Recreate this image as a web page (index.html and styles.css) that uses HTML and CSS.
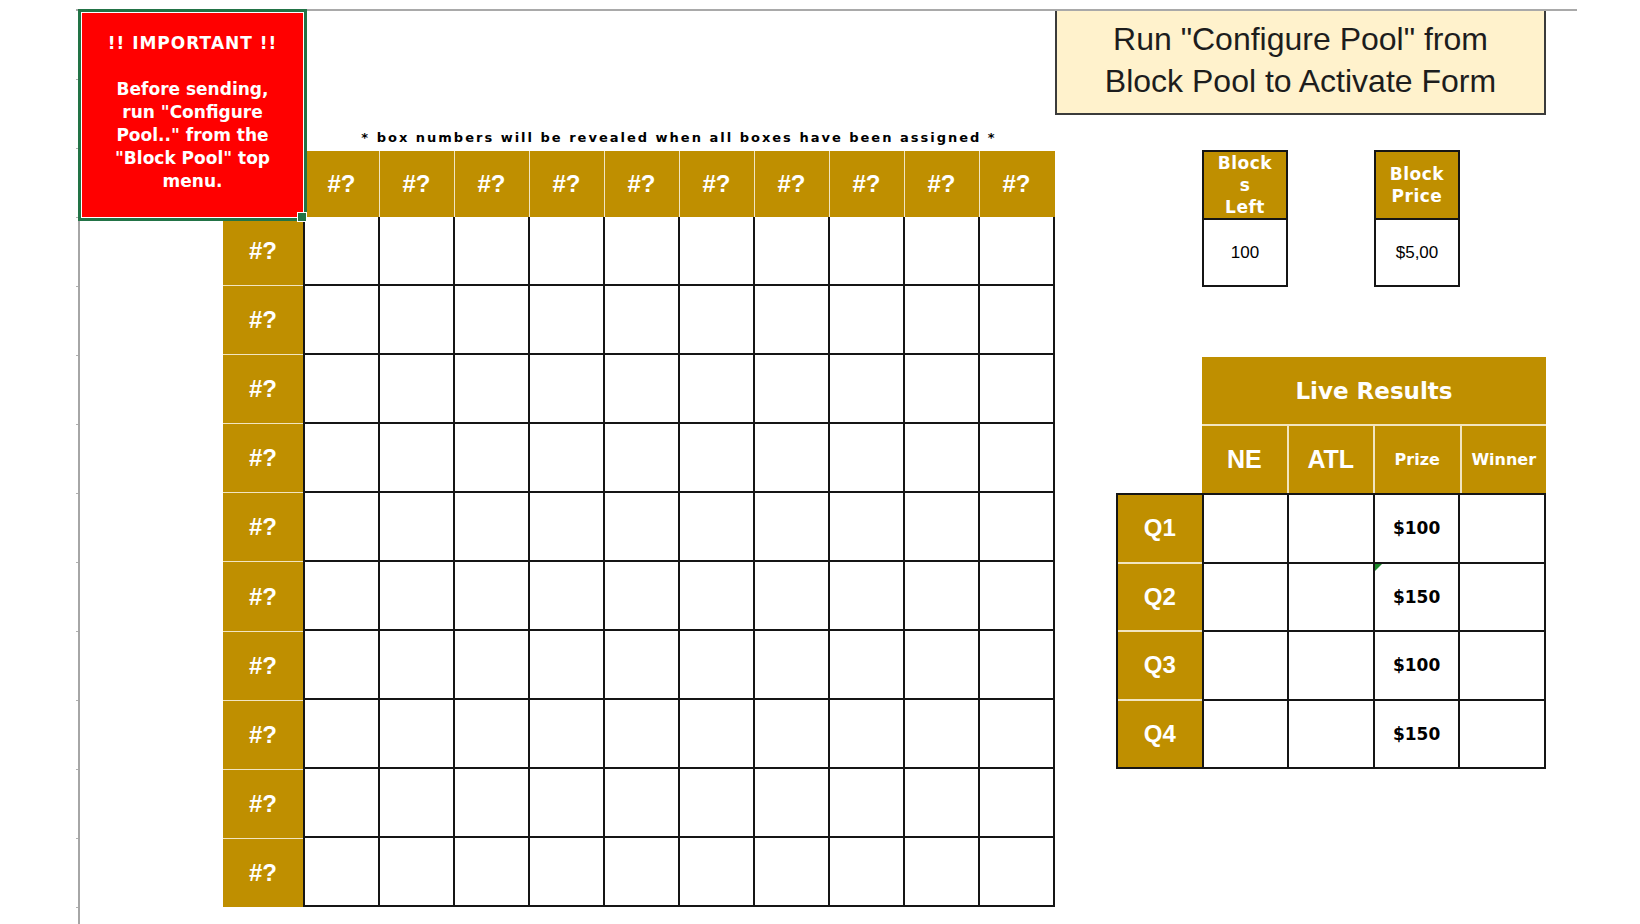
FILE: index.html
```html
<!DOCTYPE html>
<html lang="en">
<head>
<meta charset="utf-8">
<title>Block Pool</title>
<link rel="stylesheet" href="styles.css">
</head>
<body>
<div class="sheet">
  <div class="ruler"></div>

  <div class="note">
    <p class="note-title">!! IMPORTANT !!</p>
    <p>Before sending,<br>run "Configure<br>Pool.." from the<br>"Block Pool" top<br>menu.</p>
    <span class="handle"></span>
  </div>

  <p class="hint">* box numbers will be revealed when all boxes have been assigned *</p>

  <div class="col-heads">
    <div class="gold">#?</div><div class="gold">#?</div><div class="gold">#?</div><div class="gold">#?</div><div class="gold">#?</div>
    <div class="gold">#?</div><div class="gold">#?</div><div class="gold">#?</div><div class="gold">#?</div><div class="gold">#?</div>
  </div>

  <div class="row-heads">
    <div class="gold">#?</div><div class="gold">#?</div><div class="gold">#?</div><div class="gold">#?</div><div class="gold">#?</div>
    <div class="gold">#?</div><div class="gold">#?</div><div class="gold">#?</div><div class="gold">#?</div><div class="gold">#?</div>
  </div>

  <div class="board">
    <div></div><div></div><div></div><div></div><div></div><div></div><div></div><div></div><div></div><div></div>
    <div></div><div></div><div></div><div></div><div></div><div></div><div></div><div></div><div></div><div></div>
    <div></div><div></div><div></div><div></div><div></div><div></div><div></div><div></div><div></div><div></div>
    <div></div><div></div><div></div><div></div><div></div><div></div><div></div><div></div><div></div><div></div>
    <div></div><div></div><div></div><div></div><div></div><div></div><div></div><div></div><div></div><div></div>
    <div></div><div></div><div></div><div></div><div></div><div></div><div></div><div></div><div></div><div></div>
    <div></div><div></div><div></div><div></div><div></div><div></div><div></div><div></div><div></div><div></div>
    <div></div><div></div><div></div><div></div><div></div><div></div><div></div><div></div><div></div><div></div>
    <div></div><div></div><div></div><div></div><div></div><div></div><div></div><div></div><div></div><div></div>
    <div></div><div></div><div></div><div></div><div></div><div></div><div></div><div></div><div></div><div></div>
  </div>

  <div class="banner">Run "Configure Pool" from<br>Block Pool to Activate Form</div>

  <div class="stat stat-left">
    <div class="stat-head">Block<br>s<br>Left</div>
    <div class="stat-val">100</div>
  </div>
  <div class="stat stat-price">
    <div class="stat-head">Block<br>Price</div>
    <div class="stat-val">$5,00</div>
  </div>

  <div class="live-title">Live Results</div>
  <div class="live-heads">
    <div class="gold team">NE</div>
    <div class="gold team">ATL</div>
    <div class="gold small">Prize</div>
    <div class="gold small">Winner</div>
  </div>

  <div class="live-table">
    <div class="quarters">
      <div class="gold">Q1</div><div class="gold">Q2</div><div class="gold">Q3</div><div class="gold">Q4</div>
    </div>
    <div class="cell"></div><div class="cell"></div><div class="cell">$100</div><div class="cell"></div>
    <div class="cell"></div><div class="cell"></div><div class="cell"><span class="flag"></span>$150</div><div class="cell"></div>
    <div class="cell"></div><div class="cell"></div><div class="cell">$100</div><div class="cell"></div>
    <div class="cell"></div><div class="cell"></div><div class="cell">$150</div><div class="cell"></div>
  </div>
</div>
</body>
</html>
```
FILE: styles.css
```css
* { box-sizing: border-box; }
html, body { margin: 0; padding: 0; background: #fff; }
body { overflow: hidden; font-family: "DejaVu Sans", sans-serif; color: #000; }
p { margin: 0; }

.sheet {
  display: grid;
  grid-template-columns: 4px 143px 80px 752px 61px repeat(5, 86px) 31px;
  grid-template-rows: 140px 66px repeat(10, 69px) 17px;
  width: 1501px;
  margin: 9px 0 0 76px;
  border-top: 2px solid #a9a9a9;
}

.ruler {
  grid-column: 1;
  grid-row: 1 / -1;
  background:
    linear-gradient(#a6a6a6, #a6a6a6) right top / 2px 100% no-repeat,
    linear-gradient(to bottom, #b0b0b0 0 1px, transparent 1px) 0 206px / 2px 69px repeat-y;
}

.gold {
  background: #bf8f00;
  color: #fff;
  display: flex;
  align-items: center;
  justify-content: center;
  font: bold 24px "Liberation Sans", Arial, sans-serif;
}

/* red reminder */
.note {
  grid-column: 2 / 4;
  grid-row: 1 / 3;
  margin: -2px -4px -4px -2px;
  position: relative;
  z-index: 2;
  background: #ff0000;
  border: 3px solid #227346;
  box-shadow: inset 0 0 0 1px #fff;
  color: #fff;
  font: bold 17px/23px "DejaVu Sans", sans-serif;
  text-align: center;
  padding-top: 20px;
}
.note-title { margin-bottom: 23px; letter-spacing: 1px; }
.handle {
  position: absolute;
  right: -3px;
  bottom: -4px;
  width: 10px;
  height: 10px;
  background: #227346;
  border: 1px solid #fff;
}

.hint {
  grid-column: 4;
  grid-row: 1;
  align-self: end;
  text-align: center;
  font: bold 13px/16px "DejaVu Sans", sans-serif;
  letter-spacing: 2px;
  padding-bottom: 5px;
}

/* number headers */
.col-heads {
  grid-column: 4;
  grid-row: 2;
  display: grid;
  grid-template-columns: repeat(10, 1fr);
  column-gap: 2px;
  padding: 0 2px;
  background: #bf8f00;
}
.col-heads .gold + .gold { box-shadow: -1px 0 0 #f2e5c0; }

.row-heads {
  grid-column: 3;
  grid-row: 3 / 13;
  display: flex;
  flex-direction: column;
}
.row-heads .gold { flex: 1; }
.row-heads .gold + .gold { border-top: 1px solid #f2e5c0; }

.board {
  grid-column: 4;
  grid-row: 3 / 13;
  display: grid;
  grid-template-columns: repeat(10, 1fr);
  grid-template-rows: repeat(10, 1fr);
  gap: 2px;
  background: #151515;
  border: 2px solid #151515;
  border-top: 0;
}
.board div { background: #fff; }

/* right side */
.banner {
  grid-column: 5 / 11;
  grid-row: 1;
  align-self: start;
  height: 104px;
  background: #fff2cc;
  border: 2px solid #3b3b3b;
  border-top: 0;
  text-align: center;
  font: 32px/42px "Liberation Sans", Arial, sans-serif;
  color: #1d1d1d;
  padding-top: 7px;
}

.stat {
  grid-row: 2 / 4;
  margin: -1px 0;
  display: flex;
  flex-direction: column;
  border: 2px solid #151515;
}
.stat-left { grid-column: 7; }
.stat-price { grid-column: 9; }
.stat-head {
  height: 68px;
  flex: none;
  background: #bf8f00;
  border-bottom: 2px solid #151515;
  display: flex;
  align-items: center;
  justify-content: center;
  text-align: center;
  color: #fff;
  font: bold 17px/22px "DejaVu Sans", sans-serif;
  letter-spacing: 0.5px;
}
.stat-val {
  flex: 1;
  display: flex;
  align-items: center;
  justify-content: center;
  font: 17px "Liberation Sans", Arial, sans-serif;
}

.live-title {
  grid-column: 7 / 11;
  grid-row: 5;
  margin-top: 2px;
  background: #bf8f00;
  color: #fff;
  display: flex;
  align-items: center;
  justify-content: center;
  font: bold 23px "DejaVu Sans", sans-serif;
}
.live-heads {
  grid-column: 7 / 11;
  grid-row: 6;
  display: flex;
  gap: 2px;
  padding-top: 2px;
  background: #f2e5c0;
}
.live-heads .gold { flex: 1; }
.team { font: bold 25px "Liberation Sans", Arial, sans-serif; }
.small { font: bold 16px "DejaVu Sans", sans-serif; }

.live-table {
  grid-column: 6 / 11;
  grid-row: 7 / 11;
  display: grid;
  grid-template-columns: repeat(5, 1fr);
  grid-template-rows: repeat(4, 1fr);
  gap: 2px;
  background: #151515;
  border: 2px solid #151515;
}
.quarters {
  grid-column: 1;
  grid-row: 1 / 5;
  display: flex;
  flex-direction: column;
}
.quarters .gold { flex: 1; }
.quarters .gold + .gold { border-top: 2px solid #f2e5c0; }
.cell {
  position: relative;
  background: #fff;
  display: flex;
  align-items: center;
  justify-content: center;
  font: bold 17px "DejaVu Sans", sans-serif;
}
.flag {
  position: absolute;
  top: 0;
  left: 0;
  border-top: 7px solid #1a8a2a;
  border-right: 7px solid transparent;
}
```
